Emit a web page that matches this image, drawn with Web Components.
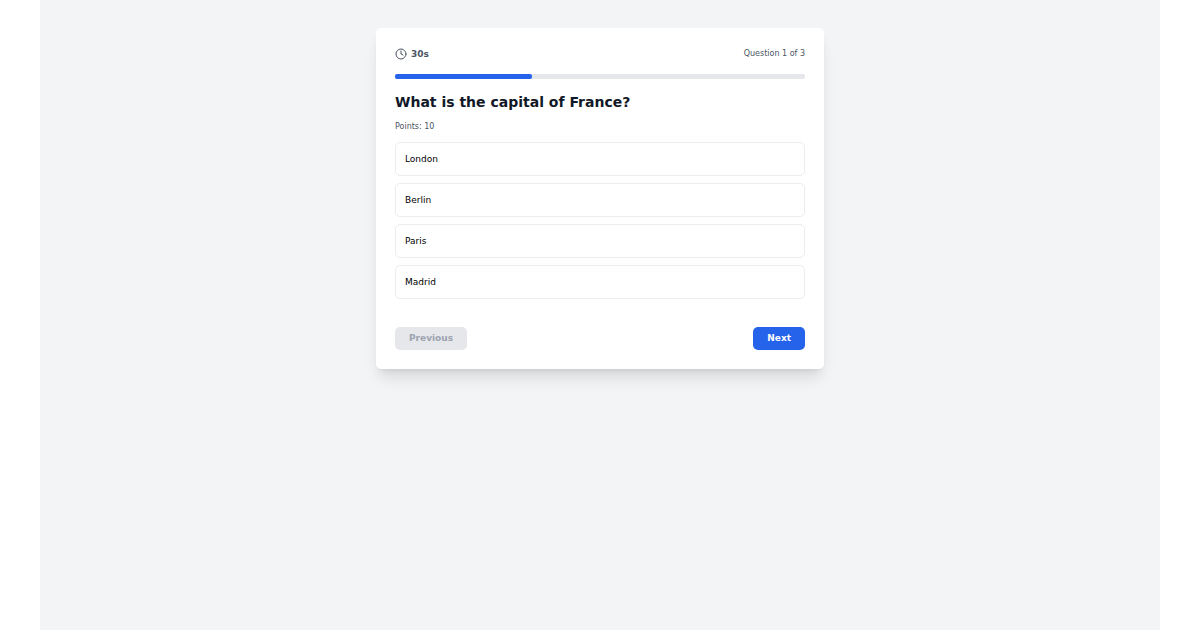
<!DOCTYPE html>
<html lang="en">
<head>
  <meta charset="UTF-8">
  <meta name="viewport" content="width=device-width, initial-scale=1.0">
  <title>Quiz</title>
  <style>
    body {
      margin: 0;
      padding: 0 40px;
      background: #fff;
      font-family: "DejaVu Sans", sans-serif;
    }
  </style>
</head>
<body>
  <quiz-page>
    <quiz-card>
      <quiz-timer slot="header" seconds="30"></quiz-timer>
      <span slot="header">Question 1 of 3</span>
      <quiz-progress slot="progress" value="1" max="3"></quiz-progress>
      <span slot="title">What is the capital of France?</span>
      <span slot="points">Points: 10</span>
      <quiz-option>London</quiz-option>
      <quiz-option>Berlin</quiz-option>
      <quiz-option>Paris</quiz-option>
      <quiz-option>Madrid</quiz-option>
      <quiz-button slot="actions" disabled>Previous</quiz-button>
      <quiz-button slot="actions">Next</quiz-button>
    </quiz-card>
  </quiz-page>

  <script>
    class QuizPage extends HTMLElement {
      constructor() {
        super()
        this.attachShadow({ mode: 'open' })
        this.shadowRoot.innerHTML = `
          <style>
            :host {
              display: block;
              box-sizing: border-box;
              min-height: 100vh;
              padding: 28px 16px;
              background: #f3f4f6;
            }
            main {
              max-width: 448px;
              margin: 0 auto;
            }
          </style>
          <main><slot></slot></main>
        `
      }
    }

    class QuizCard extends HTMLElement {
      constructor() {
        super()
        this.attachShadow({ mode: 'open' })
        this.shadowRoot.innerHTML = `
          <style>
            :host {
              display: block;
              padding: 19px;
              background: #fff;
              border-radius: 5px;
              box-shadow: 0 12px 15px -3px rgba(0, 0, 0, .1), 0 5px 6px -4px rgba(0, 0, 0, .1);
            }
            header, footer {
              display: flex;
              align-items: center;
              justify-content: space-between;
            }
            header {
              margin-bottom: 13px;
              font-size: 8px;
              line-height: 14px;
              color: #4b5563;
            }
            h2 {
              margin: 14px 0 9px;
              font-size: 14px;
              line-height: 19px;
              font-weight: 700;
              color: #111827;
            }
            p {
              margin: 0 0 9px;
              font-size: 8px;
              line-height: 12px;
              color: #4b5563;
            }
            .options {
              display: grid;
              gap: 7px;
              margin-bottom: 28px;
            }
          </style>
          <header><slot name="header"></slot></header>
          <slot name="progress"></slot>
          <h2><slot name="title"></slot></h2>
          <p><slot name="points"></slot></p>
          <div class="options"><slot></slot></div>
          <footer><slot name="actions"></slot></footer>
        `
      }
    }

    class QuizTimer extends HTMLElement {
      constructor() {
        super()
        this.attachShadow({ mode: 'open' })
        this.shadowRoot.innerHTML = `
          <style>
            :host {
              display: flex;
              align-items: center;
              gap: 4px;
              font-size: 9px;
              font-weight: 700;
              line-height: 14px;
            }
            svg {
              width: 12px;
              height: 12px;
            }
          </style>
          <svg viewBox="0 0 24 24" fill="none" stroke="currentColor" stroke-width="2" stroke-linecap="round" stroke-linejoin="round" aria-hidden="true">
            <circle cx="12" cy="12" r="10"></circle>
            <polyline points="12 6 12 12 16 14"></polyline>
          </svg>
          <span>${this.getAttribute('seconds')}s</span>
        `
      }
    }

    class QuizProgress extends HTMLElement {
      constructor() {
        super()
        const percent = this.getAttribute('value') / this.getAttribute('max') * 100
        this.attachShadow({ mode: 'open' })
        this.shadowRoot.innerHTML = `
          <style>
            :host {
              display: block;
              height: 5px;
              background: #e5e7eb;
              border-radius: 2px;
            }
            .bar {
              width: ${percent}%;
              height: 100%;
              background: #2563eb;
              border-radius: 2px;
            }
          </style>
          <div class="bar"></div>
        `
      }
    }

    class QuizOption extends HTMLElement {
      constructor() {
        super()
        this.attachShadow({ mode: 'open' })
        this.shadowRoot.innerHTML = `
          <style>
            :host {
              display: block;
            }
            button {
              display: block;
              box-sizing: border-box;
              width: 100%;
              padding: 9px;
              border: 1px solid #ebecee;
              border-radius: 5px;
              background: #fff;
              color: #000;
              font-family: inherit;
              font-size: 9px;
              line-height: 14px;
              text-align: left;
              cursor: pointer;
            }
            button:hover {
              background: #f9fafb;
            }
          </style>
          <button type="button"><slot></slot></button>
        `
      }
    }

    class QuizButton extends HTMLElement {
      constructor() {
        super()
        this.attachShadow({ mode: 'open' })
        this.shadowRoot.innerHTML = `
          <style>
            :host {
              display: block;
            }
            button {
              display: block;
              padding: 4px 14px;
              border: 0;
              border-radius: 5px;
              background: #2563eb;
              color: #fff;
              font-family: inherit;
              font-size: 9px;
              font-weight: 700;
              line-height: 15px;
              cursor: pointer;
            }
            button:disabled {
              background: #e5e7eb;
              color: #9ca3af;
              cursor: not-allowed;
            }
          </style>
          <button type="button"><slot></slot></button>
        `
        this.shadowRoot.querySelector('button').disabled = this.hasAttribute('disabled')
      }
    }

    customElements.define('quiz-page', QuizPage)
    customElements.define('quiz-card', QuizCard)
    customElements.define('quiz-timer', QuizTimer)
    customElements.define('quiz-progress', QuizProgress)
    customElements.define('quiz-option', QuizOption)
    customElements.define('quiz-button', QuizButton)
  </script>
</body>
</html>
